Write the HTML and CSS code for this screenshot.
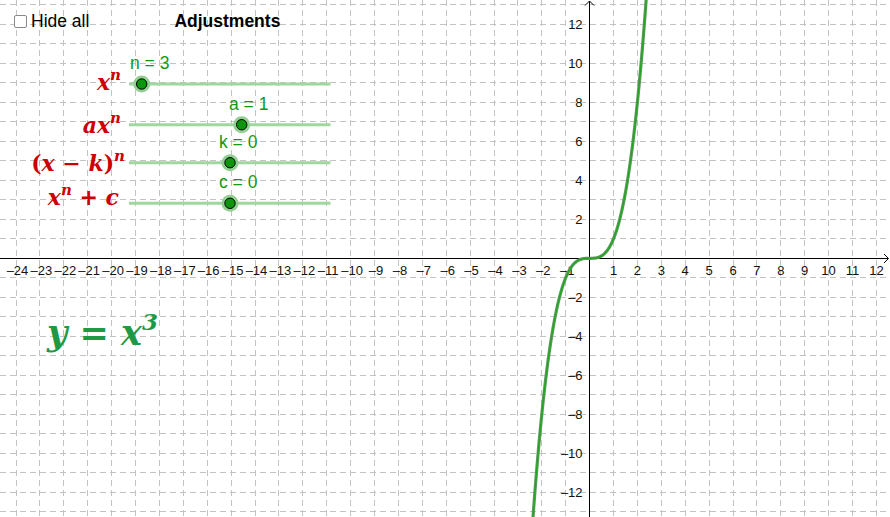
FILE: index.html
```html
<!DOCTYPE html>
<html lang="en">
<head>
  <meta charset="UTF-8">
  <title>Power functions - Adjustments</title>
  <link rel="stylesheet" href="styles.css">
</head>
<body>

  <div class="applet">
    <!-- Graphics view: grid, axes, curve and sliders are drawn by the script below -->
    <svg class="graph" id="graph" width="890" height="517" viewBox="0 0 890 517">
      <g id="grid"></g>
      <g id="axes">
        <line class="axis" x1="0" y1="258.5" x2="888" y2="258.5"></line>
        <line class="axis" x1="589.5" y1="1" x2="589.5" y2="517"></line>
        <polyline class="axis" points="884,254 888.5,258.5 884,263"></polyline>
        <polyline class="axis" points="585,5.5 589.5,1 594,5.5"></polyline>
      </g>
      <g id="ticks"></g>
      <g id="curve"></g>
      <g id="sliders"></g>

      <!-- Formula captions for each slider -->
      <text class="formula" x="121" y="90">x<tspan class="sup" dy="-10">n</tspan></text>
      <text class="formula" x="121" y="133">ax<tspan class="sup" dy="-10">n</tspan></text>
      <text class="formula" x="125" y="171"><tspan class="up">(</tspan>x <tspan class="up">−</tspan> k<tspan class="up">)</tspan><tspan class="sup" dy="-10">n</tspan></text>
      <text class="formula" x="119" y="205">x<tspan class="sup" dy="-10">n</tspan><tspan dy="10"> <tspan class="up">+</tspan> c</tspan></text>

      <text class="equation" x="47" y="345">y <tspan class="up">=</tspan> x<tspan class="sup" dy="-15">3</tspan></text>
    </svg>

    <!-- Controls over the canvas -->
    <div class="toolbar">
      <label class="hide-all"><span class="box"></span>Hide all</label>
      <span class="title">Adjustments</span>
    </div>
  </div>

  <script>
    // Coordinate system of the graphics view
    const ox = 589.6, oy = 258.3;   // origin in pixels
    const sx = 23.9, sy = 19.5;     // pixels per unit
    const W = 890, H = 517;
    const NS = 'http://www.w3.org/2000/svg';

    function el(tag, attrs, parent) {
      const node = document.createElementNS(NS, tag);
      for (const k in attrs) node.setAttribute(k, attrs[k]);
      parent.appendChild(node);
      return node;
    }

    const px = u => ox + u * sx;
    const py = v => oy - v * sy;

    // Dashed grid
    const grid = document.getElementById('grid');
    for (let k = -26; k <= 14; k++) {
      const x = Math.floor(px(k)) + 0.5;
      if (x < 0 || x > W || k === 0) continue;
      el('line', { class: 'grid-line', x1: x, y1: 0, x2: x, y2: H }, grid);
    }
    for (let k = -14; k <= 14; k++) {
      const y = Math.floor(py(k)) + 0.5;
      if (y < 0 || y > H || k === 0) continue;
      el('line', { class: 'grid-line', x1: 0, y1: y, x2: W, y2: y }, grid);
    }

    // Axis numbers (GeoGebra draws a long dash for the minus)
    const ticks = document.getElementById('ticks');
    const fmt = n => (n < 0 ? '\u2013' + (-n) : '' + n);
    for (let k = -24; k <= 12; k++) {
      if (k === 0) continue;
      const t = el('text', { class: 'tick-label', x: px(k) + (k < 0 ? 1.5 : 0), y: oy + 16.5, 'text-anchor': 'middle' }, ticks);
      t.textContent = fmt(k);
    }
    for (let k = -12; k <= 12; k += 2) {
      if (k === 0) continue;
      const t = el('text', { class: 'tick-label', x: ox - 7, y: py(k) + 5, 'text-anchor': 'end' }, ticks);
      t.textContent = fmt(k);
    }

    // f(x) = x^3
    let d = '';
    for (let u = -2.5; u <= 2.5; u += 0.01) {
      d += (d ? 'L' : 'M') + px(u).toFixed(2) + ',' + py(u * u * u).toFixed(2);
    }
    const curve = document.getElementById('curve');
    el('path', { class: 'curve-outer', d: d }, curve);
    el('path', { class: 'curve-inner', d: d }, curve);

    // Sliders: track y, point x, caption
    const sliders = [
      { y: 84, x: 141.7, text: 'n = 3', lx: 130, ly: 68.5 },
      { y: 124.7, x: 241.7, text: 'a = 1', lx: 229, ly: 110 },
      { y: 162.7, x: 230, text: 'k = 0', lx: 219, ly: 148.3 },
      { y: 203.3, x: 230, text: 'c = 0', lx: 219, ly: 188.3 }
    ];
    const group = document.getElementById('sliders');
    sliders.forEach(s => {
      el('line', { class: 'slider-track', x1: 129, y1: s.y, x2: 330.5, y2: s.y }, group);
      el('circle', { class: 'slider-halo', cx: s.x, cy: s.y, r: 8.5 }, group);
      el('circle', { class: 'slider-point', cx: s.x, cy: s.y, r: 5.2 }, group);
      const t = el('text', { class: 'slider-label', x: s.lx, y: s.ly }, group);
      t.textContent = s.text;
    });
  </script>

</body>
</html>
```

FILE: styles.css
```css
/* Page */
body {
  margin: 0;
  background-color: #fff;
  font-family: "Liberation Sans", Arial, sans-serif;
  color: #000;
}

.applet {
  position: relative;
  width: 890px;
  height: 517px;
  overflow: hidden;
}

.graph {
  display: block;
}

/* Grid and axes */
.grid-line {
  stroke: #c3c3c3;
  stroke-width: 1;
  stroke-dasharray: 6 4;
}

.axis {
  stroke: #000;
  stroke-width: 1;
  fill: none;
}

.tick-label {
  font-family: "Liberation Sans", Arial, sans-serif;
  font-size: 13px;
  fill: #111;
}

/* Function graph */
.curve-outer {
  fill: none;
  stroke: #5f9a5f;
  stroke-width: 3.2;
  stroke-linejoin: round;
}

.curve-inner {
  fill: none;
  stroke: #1fa81f;
  stroke-width: 1.3;
  stroke-linejoin: round;
}

/* Sliders */
.slider-track {
  stroke: #9fd79f;
  stroke-width: 3;
}

.slider-halo {
  fill: #93cf93;
}

.slider-point {
  fill: #0d960d;
  stroke: #000;
  stroke-width: 1;
}

.slider-label {
  font-family: "Liberation Sans", Arial, sans-serif;
  font-size: 17.5px;
  fill: #119a11;
}

/* Formulas */
.formula,
.equation {
  font-family: "DejaVu Serif", serif;
  font-weight: bold;
  font-style: italic;
}

.formula {
  font-size: 22px;
  fill: #cc0000;
  text-anchor: end;
}

.formula .sup {
  font-size: 15px;
}

.equation {
  font-size: 35px;
  fill: #1f9a44;
}

.equation .sup {
  font-size: 23px;
}

.up {
  font-style: normal;
}

/* Controls over the canvas */
.toolbar {
  position: absolute;
  top: 0;
  left: 0;
  display: flex;
  align-items: center;
  padding: 11px 0 0 14px;
  font-size: 17.5px;
  line-height: 20px;
}

.hide-all {
  display: flex;
  align-items: center;
  gap: 4px;
}

.box {
  width: 11px;
  height: 11px;
  border: 1.5px solid #8a8a8a;
  border-radius: 2px;
  background-color: #fff;
}

.title {
  margin-left: 85px;
  font-weight: bold;
}
```
